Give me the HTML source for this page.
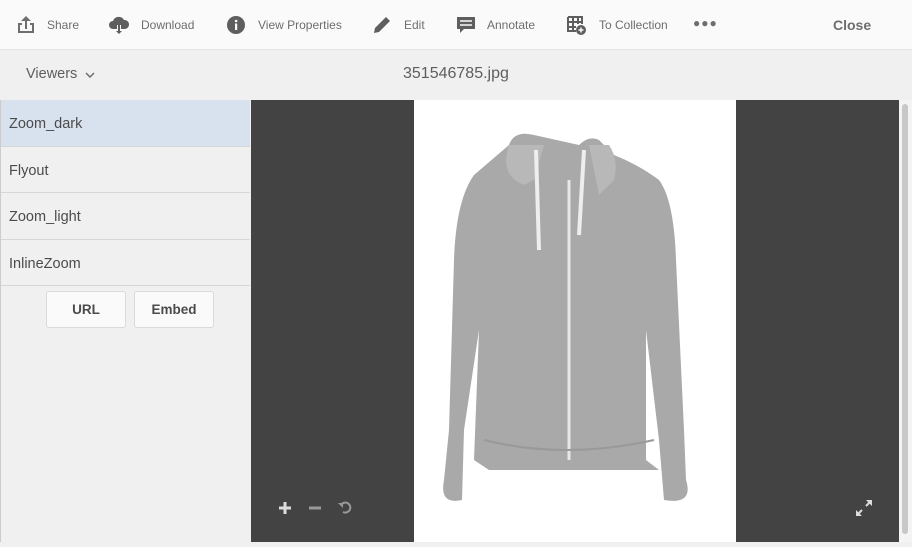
<!DOCTYPE html>
<html><head><style>
*{margin:0;padding:0;box-sizing:border-box}
body{width:912px;height:542px;overflow:hidden;background:#f0f0f0;font-family:"Liberation Sans",sans-serif;position:relative}
.tb{position:absolute;left:0;top:0;width:912px;height:50px;background:#fafafa;border-bottom:1px solid #e4e4e4}
.tb span{position:absolute;top:18px;font-size:12px;color:#6e6e6e}
.tb svg{position:absolute}
.sub{position:absolute;left:0;top:50px;width:912px;height:50px;background:#f0f0f0}
.left{position:absolute;left:0;top:100px;width:250px;height:442px;background:#f0f0f0;border-left:1px solid #ccc}
.it{height:46.5px;border-bottom:1px solid #d6d6d6;font-size:14.5px;color:#4b4b4b;padding:16px 0 0 8px}
.btn{position:absolute;top:191px;height:37px;border:1px solid #dadada;border-radius:3px;background:#fafafa;font-size:13.5px;font-weight:bold;color:#4b4b4b;text-align:center;line-height:35px}
.view{position:absolute;left:251px;top:100px;width:648px;height:442px;background:#434343}
.img{position:absolute;left:163px;top:0;width:322px;height:442px;background:#fff}
.sb{position:absolute;left:899px;top:100px;width:13px;height:442px;background:#f4f4f4}
</style></head><body>
<div class="tb">
<svg style="left:16px;top:15px" width="20" height="20" viewBox="0 0 20 20"><path d="M2 8v10h16V8h-4v2h2v6H4v-6h2V8z M10 1l-5 5h4v8h2V6h4z" fill="#6e6e6e"/></svg><span style="left:47px">Share</span>
<svg style="left:108px;top:14px" width="22" height="22" viewBox="0 0 22 22"><path d="M5 15a4 4 0 0 1 0-8 6 6 0 0 1 11-1 4.5 4.5 0 0 1 1 9h-4v-4H9v4z" fill="#5e5e5e"/><path d="M10 11h2v6h2l-3 3-3-3h2z" fill="#5e5e5e"/></svg><span style="left:141px">Download</span>
<svg style="left:227px;top:16px" width="18" height="18" viewBox="0 0 18 18"><circle cx="9" cy="9" r="9" fill="#5e5e5e"/><rect x="8" y="7.5" width="2.2" height="6.5" fill="#fafafa"/><circle cx="9.1" cy="5" r="1.3" fill="#fafafa"/></svg><span style="left:258px">View Properties</span>
<svg style="left:372px;top:15px" width="20" height="20" viewBox="0 0 20 20"><path d="M2 18l1-5L14 2l4 4L7 17z" fill="#5e5e5e"/></svg><span style="left:404px">Edit</span>
<svg style="left:456px;top:16px" width="20" height="19" viewBox="0 0 20 19"><path d="M1 1h18v12H8l-4 4v-4H1z" fill="#5e5e5e"/><path d="M4 5h12M4 9h12" stroke="#fafafa" stroke-width="1.5"/></svg><span style="left:487px">Annotate</span>
<svg style="left:567px;top:16px" width="20" height="20" viewBox="0 0 20 20"><path d="M1 1h14v7M1 1v14h8M1 6h14M1 11h8M6 1v14M11 1v7" stroke="#5e5e5e" stroke-width="2" fill="none"/><circle cx="14" cy="14" r="5" fill="#5e5e5e"/><path d="M14 11.5v5M11.5 14h5" stroke="#fafafa" stroke-width="1.5"/></svg><span style="left:599px">To Collection</span>
<span style="left:693px;top:16px;font-size:12px;font-weight:bold;letter-spacing:1px">●●●</span>
<span style="left:833px;top:17px;font-size:14px;color:#6e6e6e;font-weight:bold">Close</span>
</div>
<div class="sub">
<span style="position:absolute;left:26px;top:16px;font-size:14.5px;color:#5e5e5e">Viewers</span>
<svg style="position:absolute;left:85px;top:22px" width="10" height="6"><path d="M1 1l4 4 4-4" stroke="#6e6e6e" stroke-width="1.5" fill="none"/></svg>
<span style="position:absolute;left:403px;top:15px;font-size:16px;color:#5e5e5e">351546785.jpg</span>
</div>
<div class="left">
<div class="it" style="background:#d8e2ef">Zoom_dark</div>
<div class="it">Flyout</div>
<div class="it">Zoom_light</div>
<div class="it">InlineZoom</div>
<div class="btn" style="left:45px;width:80px">URL</div>
<div class="btn" style="left:133px;width:80px">Embed</div>
</div>
<div class="view">
<div class="img">
<svg width="322" height="442" viewBox="0 0 322 442">
<g fill="#a9a9a9">
<path d="M95 45 Q100 30 120 35 L165 45 Q175 35 185 40 L200 55 Q225 65 245 80 Q260 100 262 160 L270 330 L272 380 Q280 405 250 400 L245 340 L232 230 L232 360 L245 370 L220 370 L75 370 L60 360 L65 230 L50 330 L48 400 Q25 405 30 380 L35 330 L40 160 Q42 100 60 75 Z"/>
</g>
<g fill="#b8b8b8"><path d="M95 45 Q85 75 110 85 L120 80 L130 45 Z"/><path d="M175 45 L185 95 L200 80 Q205 60 195 45Z"/></g>
<path d="M155 80 L155 360" stroke="#e8e8e8" stroke-width="3"/>
<path d="M122 50 L125 150 M170 50 L165 135" stroke="#eee" stroke-width="4"/>
<path d="M70 340 Q150 360 240 340" stroke="#999" stroke-width="2" fill="none"/>
</svg>
</div>
<svg style="position:absolute;left:27px;top:401px" width="14" height="14"><path d="M7 1v12M1 7h12" stroke="#ddd" stroke-width="3"/></svg>
<svg style="position:absolute;left:57px;top:401px" width="14" height="14"><path d="M1 7h12" stroke="#999" stroke-width="3"/></svg>
<svg style="position:absolute;left:86px;top:399px" width="16" height="16"><path d="M4 6a5 5 0 1 1 2 7" stroke="#999" stroke-width="2" fill="none"/><path d="M1 4h5v5z" fill="#999"/></svg>
<svg style="position:absolute;left:603px;top:398px" width="20" height="20"><path d="M12 2h6v6zM2 12v6h6z" fill="#ddd"/><path d="M16 4l-4 4M4 16l4-4" stroke="#ddd" stroke-width="2"/></svg>
</div>
<div class="sb"><div style="position:absolute;left:3px;top:4px;width:6px;height:430px;background:#c8c8c8;border-radius:3px"></div></div>
</body></html>
